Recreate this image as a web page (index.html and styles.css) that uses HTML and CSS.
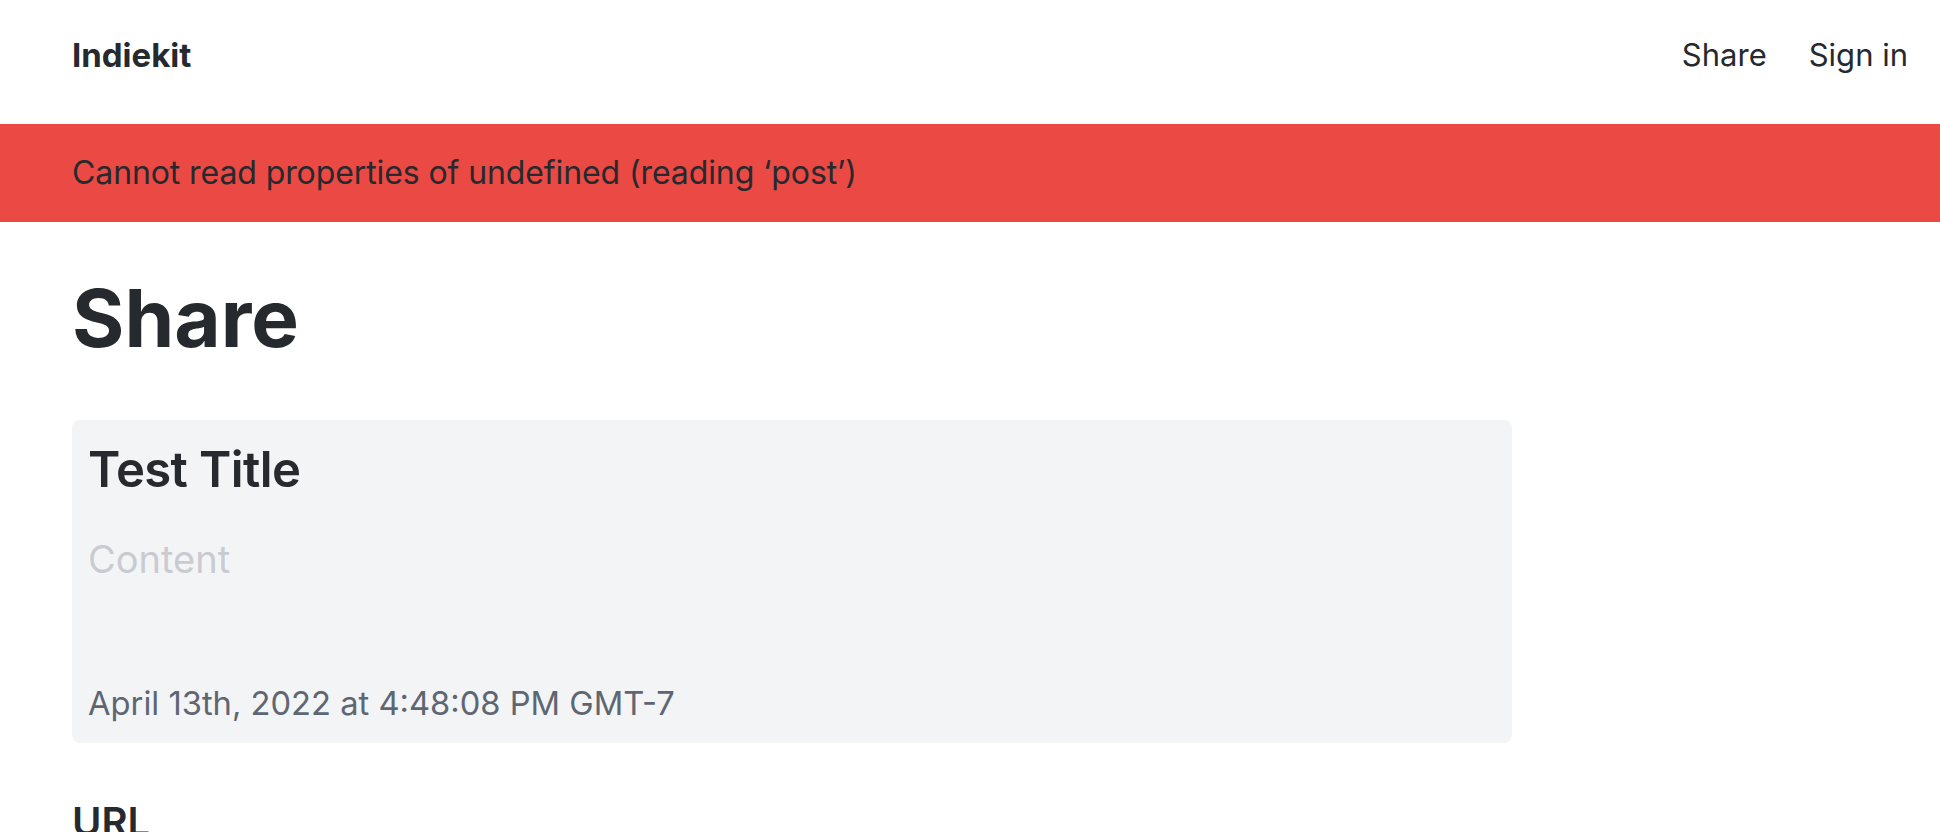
FILE: index.html
```html
<!DOCTYPE html>
<html lang="en">
<head>
<meta charset="utf-8">
<title>Share - Indiekit</title>
<link rel="stylesheet" href="styles.css">
</head>
<body>
<header class="header">
  <a class="brand" href="#">Indiekit</a>
  <nav class="nav">
    <a class="nav-link" href="#">Share</a>
    <a class="nav-link" href="#">Sign in</a>
  </nav>
</header>
<div class="notice">Cannot read properties of undefined (reading ‘post’)</div>
<main class="main">
  <h1 class="page-title">Share</h1>
  <article class="preview">
    <h2 class="preview-title">Test Title</h2>
    <div class="preview-content">Content</div>
    <time class="preview-date">April 13th, 2022 at 4:48:08 PM GMT-7</time>
  </article>
  <label class="field-label">URL</label>
</main>
</body>
</html>
```
FILE: styles.css
```css
html, body {
  margin: 0;
  padding: 0;
  background: #ffffff;
}
body {
  font-family: Inter, "Noto Sans", "Liberation Sans", sans-serif;
  color: #26292e;
  overflow: hidden;
  height: 832px;
}
a {
  color: inherit;
  text-decoration: none;
}
.header {
  box-sizing: border-box;
  height: 124px;
  padding: 35px 32px 0 72px;
  display: flex;
  justify-content: space-between;
  align-items: flex-start;
}
.brand {
  font-size: 33px;
  line-height: 40px;
  font-weight: 700;
}
.nav {
  display: flex;
  gap: 42px;
}
.nav-link {
  font-size: 31px;
  line-height: 40px;
  font-weight: 400;
}
.notice {
  box-sizing: border-box;
  height: 98px;
  padding: 29px 72px;
  background: #ea4a43;
  font-size: 32px;
  line-height: 40px;
  letter-spacing: -0.1px;
  color: #26292e;
}
.main {
  padding: 48px 72px 0 72px;
}
.page-title {
  margin: 0;
  font-size: 80px;
  line-height: 96px;
  font-weight: 700;
}
.preview {
  box-sizing: border-box;
  margin-top: 54px;
  width: 1440px;
  min-height: 323px;
  padding: 18px 18px 19px 16px;
  background: #f3f4f6;
  border-radius: 8px;
  display: flex;
  flex-direction: column;
}
.preview-title {
  margin: 0;
  font-size: 49px;
  line-height: 64px;
  font-weight: 600;
  letter-spacing: -0.6px;
}
.preview-content {
  margin-top: 28px;
  min-height: 153px;
  font-size: 38px;
  line-height: 58px;
  color: #c9cbd1;
}
.preview-date {
  display: block;
  font-size: 32.7px;
  line-height: 41px;
  color: #5f6672;
}
.field-label {
  display: block;
  margin-top: 55px;
  font-size: 40px;
  line-height: 48px;
  font-weight: 600;
}
```
